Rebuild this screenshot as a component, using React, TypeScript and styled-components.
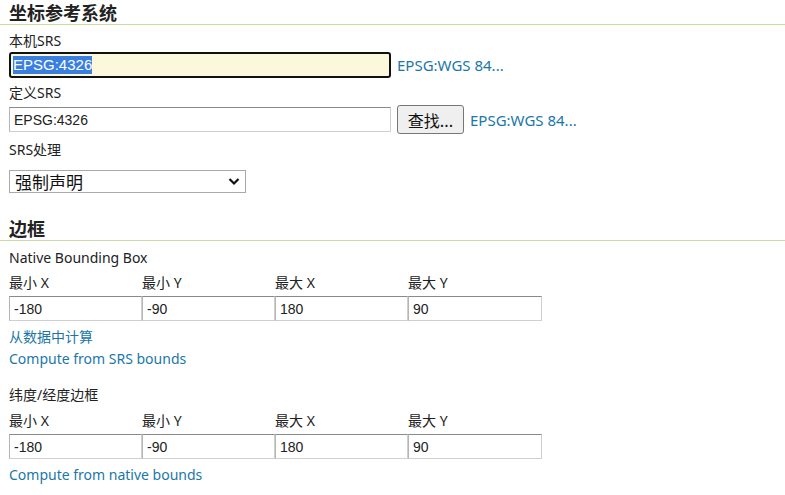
import React from "react";
import styled, { createGlobalStyle } from "styled-components";

const Global = createGlobalStyle`
  html, body { margin: 0; padding: 0; background: #fff; }
  body {
    font-family: "Noto Sans", "Noto Sans CJK SC", sans-serif;
    font-size: 14px;
    color: #222;
  }
  * { box-sizing: border-box; }
`;

const Page = styled.div`
  padding: 0 0 0 9px;
  width: 785px;
`;

const Heading = styled.h2<{ $line: string; $top?: number }>`
  margin: ${(p) => p.$top ?? 0}px 0 0 -9px;
  padding: 0 0 0 9px;
  font-family: "Noto Sans CJK SC", sans-serif;
  font-size: 18px;
  font-weight: 700;
  line-height: 24px;
  height: 25px;
  color: #222;
  border-bottom: 1px solid ${(p) => p.$line};
`;

const Label = styled.div<{ $top: number }>`
  margin-top: ${(p) => p.$top}px;
  line-height: 20px;
  height: 20px;
  font-size: 14px;
  color: #222;
`;

const Row = styled.div<{ $top: number }>`
  display: flex;
  align-items: center;
  gap: 6px;
  margin-top: ${(p) => p.$top}px;
`;

const FocusedField = styled.div`
  width: 382px;
  height: 26px;
  border: 2px solid #111;
  border-radius: 3px;
  background: #fcf8dc;
  padding: 0 2px;
  display: flex;
  align-items: center;
  font-family: "Liberation Sans", Arial, sans-serif;
  font-size: 15px;
`;

const Selected = styled.span`
  background: #3a7fe0;
  color: #fff;
  line-height: 18px;
`;

const TextInput = styled.input<{ $w: number }>`
  width: ${(p) => p.$w}px;
  height: 25px;
  margin: 0;
  padding: 0 4px;
  border: 1px solid #cfcfcf;
  border-top-color: #8a8a8a;
  border-left-color: #b5b5b5;
  background: #fff;
  font-family: "Liberation Sans", Arial, sans-serif;
  font-size: 14px;
  color: #222;
  outline: none;
`;

const Button = styled.button`
  height: 29px;
  width: 67px;
  padding: 0;
  border: 1px solid #767676;
  border-radius: 3px;
  background: #efefef;
  font-family: "Noto Sans CJK SC", sans-serif;
  font-size: 16px;
  color: #111;
`;

const Link = styled.a`
  color: #1a77a8;
  text-decoration: none;
  font-size: 14px;
  line-height: 22px;
  display: block;
  cursor: pointer;
`;

const InlineLink = styled(Link)`
  display: inline;
  font-size: 15px;
`;

const SelectWrap = styled.div`
  position: relative;
  width: 237px;
  height: 23px;
  margin-top: 10px;
`;

const Select = styled.select`
  appearance: none;
  width: 100%;
  height: 100%;
  margin: 0;
  padding: 0 0 0 5px;
  border: 1px solid #aaa;
  background: #fff;
  font-family: "Noto Sans CJK SC", sans-serif;
  font-size: 17px;
  line-height: 21px;
  color: #111;
`;

const Chevron = styled.svg`
  position: absolute;
  right: 6px;
  top: 7px;
  pointer-events: none;
`;

const Grid = styled.div<{ $top: number }>`
  display: grid;
  grid-template-columns: repeat(4, 133px);
  margin-top: ${(p) => p.$top}px;
`;

const ColLabel = styled.div`
  line-height: 20px;
  height: 20px;
  font-size: 14px;
  color: #222;
`;

const Links = styled.div<{ $top: number }>`
  margin-top: ${(p) => p.$top}px;
`;

const BoundsGrid = ({ top, values }: { top: number; values: string[] }) => {
  const labels = ["最小 X", "最小 Y", "最大 X", "最大 Y"];
  return (
    <>
      <Grid $top={top}>
        {labels.map((l) => (
          <ColLabel key={l}>{l}</ColLabel>
        ))}
      </Grid>
      <Grid $top={3}>
        {values.map((v, i) => (
          <TextInput key={i} $w={i === 3 ? 134 : 133} defaultValue={v} />
        ))}
      </Grid>
    </>
  );
};

export default function App() {
  return (
    <Page>
      <Global />
      <Heading $line="#c6e19b">坐标参考系统</Heading>
      <Label $top={6}>本机SRS</Label>
      <Row $top={1}>
        <FocusedField role="textbox">
          <Selected>EPSG:4326</Selected>
        </FocusedField>
        <InlineLink>EPSG:WGS 84...</InlineLink>
      </Row>
      <Label $top={5}>定义SRS</Label>
      <Row $top={2}>
        <TextInput $w={382} defaultValue="EPSG:4326" />
        <Button>查找...</Button>
        <InlineLink>EPSG:WGS 84...</InlineLink>
      </Row>
      <Label $top={6}>SRS处理</Label>
      <SelectWrap>
        <Select defaultValue="force">
          <option value="force">强制声明</option>
        </Select>
        <Chevron width="12" height="9" viewBox="0 0 12 9">
          <path d="M1.5 2 L6 6.5 L10.5 2" fill="none" stroke="#111" strokeWidth="2.2" />
        </Chevron>
      </SelectWrap>
      <Heading $line="#c9dcae" $top={23}>边框</Heading>
      <Label $top={7}>Native Bounding Box</Label>
      <BoundsGrid top={5} values={["-180", "-90", "180", "90"]} />
      <Links $top={5}>
        <Link>从数据中计算</Link>
        <Link>Compute from SRS bounds</Link>
      </Links>
      <Label $top={15}>纬度/经度边框</Label>
      <BoundsGrid top={6} values={["-180", "-90", "180", "90"]} />
      <Links $top={5}>
        <Link>Compute from native bounds</Link>
      </Links>
    </Page>
  );
}
